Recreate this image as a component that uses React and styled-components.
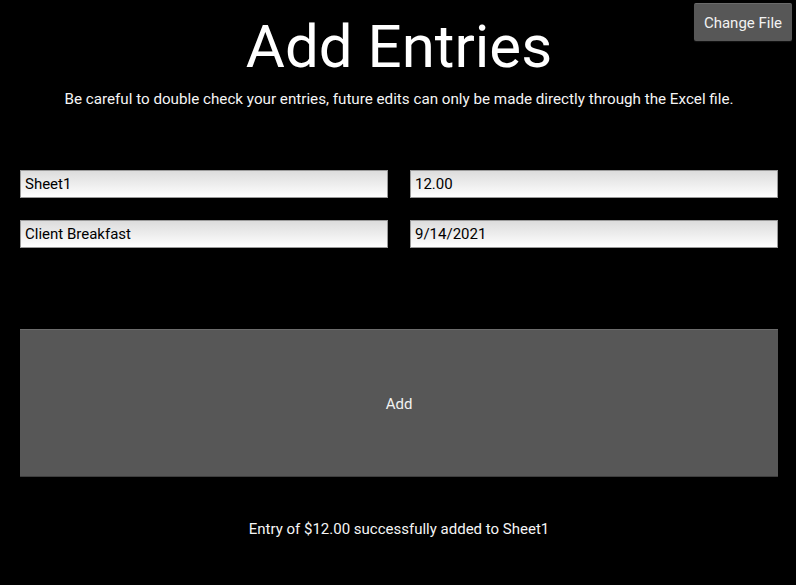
import React from "react";
import styled, { createGlobalStyle } from "styled-components";

const Global = createGlobalStyle`
  html, body { margin: 0; padding: 0; background: #000; }
  body { font-family: Roboto, "Noto Sans", sans-serif; color: #fff; }
  * { box-sizing: border-box; }
`;

const Page = styled.div`
  position: relative;
  width: 796px;
  height: 585px;
  background: #000;
  padding: 0 18px 0 20px;
  display: flex;
  flex-direction: column;
`;

const ChangeButton = styled.button`
  position: absolute;
  top: 3px;
  right: 4px;
  width: 98px;
  height: 38px;
  background: #575757;
  color: #f2f2f2;
  border: none;
  border-top: 1px solid #6a6a6a;
  border-radius: 2px;
  box-shadow: 0 1px 1px rgba(255,255,255,0.08);
  font-family: Roboto, sans-serif;
  font-size: 15px;
  padding: 0;
`;

const Title = styled.h1`
  margin: 12px 0 0;
  font-family: Roboto, sans-serif;
  font-weight: 400;
  font-size: 60px;
  line-height: 70px;
  text-align: center;
  color: #fff;
`;

const Subtitle = styled.p`
  margin: 7px 0 0;
  font-size: 15.2px;
  line-height: 20px;
  text-align: center;
  color: #f5f5f5;
`;

const Grid = styled.div`
  margin-top: 61px;
  display: grid;
  grid-template-columns: 368px 368px;
  column-gap: 22px;
  row-gap: 22px;
`;

const Field = styled.input`
  height: 28px;
  width: 100%;
  border: 1px solid #9a9a9a;
  background: linear-gradient(to bottom, #dcdcdc 0%, #f4f4f4 70%, #ffffff 100%);
  color: #000;
  font-family: Roboto, sans-serif;
  font-size: 15px;
  padding: 0 4px;
  outline: none;
`;

const AddButton = styled.button`
  margin-top: 81px;
  width: 758px;
  height: 148px;
  background: #575757;
  color: #f2f2f2;
  border: none;
  border-top: 1px solid #6c6c6c;
  border-bottom: 1px solid #3e3e3e;
  font-family: Roboto, sans-serif;
  font-size: 15px;
  padding: 2px 0 0;
`;

const Status = styled.p`
  margin: 42px 0 0;
  width: 758px;
  text-align: center;
  font-size: 15px;
  line-height: 20px;
  color: #f5f5f5;
`;

export default function App() {
  return (
    <Page>
      <Global />
      <ChangeButton>Change File</ChangeButton>
      <Title>Add Entries</Title>
      <Subtitle>
        Be careful to double check your entries, future edits can only be made directly through the Excel file.
      </Subtitle>
      <Grid>
        <Field defaultValue="Sheet1" />
        <Field defaultValue="12.00" />
        <Field defaultValue="Client Breakfast" />
        <Field defaultValue="9/14/2021" />
      </Grid>
      <AddButton>Add</AddButton>
      <Status>Entry of $12.00 successfully added to Sheet1</Status>
    </Page>
  );
}
